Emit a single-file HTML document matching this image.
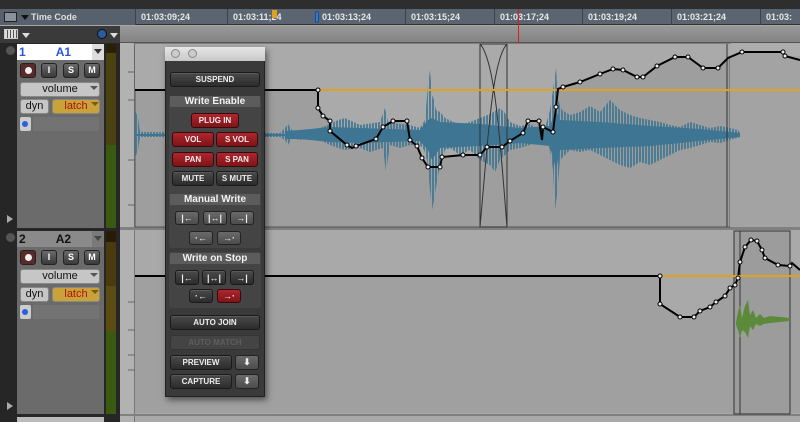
<!DOCTYPE html>
<html><head><meta charset="utf-8"><style>
*{box-sizing:border-box;margin:0;padding:0}
body{width:800px;height:422px;overflow:hidden;background:#a8a8a8;font-family:"Liberation Sans",sans-serif;position:relative}
.a{position:absolute}
.btn{position:absolute;border-radius:3px;font:bold 8px "Liberation Sans",sans-serif;color:#eee;text-align:center;display:flex;align-items:center;justify-content:center}
.dk{background:linear-gradient(#4a4a4a,#2c2c2c);border:1px solid #1a1a1a;box-shadow:inset 0 1px 0 #5a5a5a}
.rd{background:linear-gradient(#b0262e,#7e1419);border:1px solid #3a0a0a}
.gr{background:linear-gradient(#6a6a6a,#4c4c4c);border:1px solid #222;font-size:9px}
.hd{position:absolute;left:170px;width:90px;height:11px;background:#5c5c5c;color:#f2f2f2;font:bold 10px "Liberation Sans",sans-serif;text-align:center;line-height:11px}
.tb{position:absolute;width:16px;height:15px;border-radius:3px;background:linear-gradient(#6a6a6a,#3a3a3a);border:1px solid #222;color:#fff;font:bold 9px "Liberation Sans",sans-serif;text-align:center;line-height:13px}
.lb{position:absolute;border-radius:3px;background:#c6c6c6;border:1px solid #888;font:11px "Liberation Sans",sans-serif;color:#111;text-align:center}
.tc{position:absolute;top:9px;height:16px;color:#e8e8e8;font:bold 9px "Liberation Sans",sans-serif;line-height:16px;border-left:1px solid #3a424a;padding-left:5px}
</style></head><body>
<div class="a" style="left:0;top:0;width:800px;height:9px;background:#2e2e2e"></div>
<div class="a" style="left:0;top:9px;width:800px;height:16px;background:#5a6571;border-bottom:1px solid #333"></div>
<div class="a" style="left:0;top:9px;width:135px;height:16px;background:#56616d"></div>
<div class="a" style="left:4px;top:12px;width:13px;height:10px;border:1px solid #222;background:#8a939c"></div>
<div class="a" style="left:21px;top:15px;width:0;height:0;border-left:4px solid transparent;border-right:4px solid transparent;border-top:5px solid #111"></div>
<div class="a" style="left:31px;top:9px;color:#ddd;font:bold 9px 'Liberation Sans',sans-serif;line-height:16px">Time Code</div>
<div class="tc" style="left:135px;width:92px">01:03:09;24</div>
<div class="tc" style="left:227px;width:90px">01:03:11;24</div>
<div class="tc" style="left:317px;width:88px;border-left:none">01:03:13;24</div>
<div class="tc" style="left:405px;width:89px">01:03:15;24</div>
<div class="tc" style="left:494px;width:88px">01:03:17;24</div>
<div class="tc" style="left:582px;width:89px">01:03:19;24</div>
<div class="tc" style="left:671px;width:89px">01:03:21;24</div>
<div class="tc" style="left:760px;width:40px">01:03:</div>
<div class="a" style="left:272px;top:10px;width:5px;height:8px;background:#e0a020"></div>
<div class="a" style="left:315px;top:11px;width:4px;height:12px;border:1px solid #1a4a9a;border-radius:2px;background:#3a78d0"></div>
<div class="a" style="left:0;top:26px;width:120px;height:17px;background:#3a3a3a"></div>
<div class="a" style="left:120px;top:26px;width:680px;height:17px;background:linear-gradient(#999,#838383);border-bottom:1px solid #555"></div>
<div class="a" style="left:4px;top:29px;width:14px;height:10px;border:1px solid #ccc;background:repeating-linear-gradient(90deg,#ddd 0 2px,#555 2px 3px)"></div>
<div class="a" style="left:22px;top:33px;border-left:4px solid transparent;border-right:4px solid transparent;border-top:5px solid #ddd"></div>
<div class="a" style="left:97px;top:29px;width:10px;height:10px;border-radius:50%;background:#2d5aa0;border:1px solid #111"></div>
<div class="a" style="left:110px;top:33px;border-left:4px solid transparent;border-right:4px solid transparent;border-top:5px solid #ddd"></div>
<div class="a" style="left:518px;top:9px;width:1px;height:35px;background:#d02020"></div>
<div class="a" style="left:0;top:43px;width:120px;height:379px;background:#262626"></div>
<div class="a" style="left:17px;top:44px;width:87px;height:184px;background:#6b6b6b"></div>
<div class="a" style="left:17px;top:231px;width:87px;height:183px;background:#6b6b6b"></div>
<div class="a" style="left:17px;top:417px;width:87px;height:5px;background:#bbb"></div>
<div class="a" style="left:6px;top:46px;width:9px;height:9px;border-radius:50%;background:#555"></div>
<div class="a" style="left:6px;top:233px;width:9px;height:9px;border-radius:50%;background:#555"></div>
<div class="a" style="left:7px;top:215px;border-top:4px solid transparent;border-bottom:4px solid transparent;border-left:6px solid #aaa"></div>
<div class="a" style="left:7px;top:402px;border-top:4px solid transparent;border-bottom:4px solid transparent;border-left:6px solid #aaa"></div>
<div class="a" style="left:17px;top:44px;width:75px;height:16px;background:#fff;color:#2a55e0;font:bold 12px 'Liberation Sans',sans-serif;line-height:16px;padding-left:2px">1<span style="margin-left:30px">A1</span></div>
<div class="a" style="left:92px;top:44px;width:12px;height:16px;background:#ddd"></div>
<div class="a" style="left:94px;top:49px;border-left:4px solid transparent;border-right:4px solid transparent;border-top:5px solid #333"></div>
<div class="a" style="left:17px;top:231px;width:75px;height:16px;background:#8a8a8a;color:#111;font:bold 12px 'Liberation Sans',sans-serif;line-height:16px;padding-left:2px">2<span style="margin-left:30px">A2</span></div>
<div class="a" style="left:92px;top:231px;width:12px;height:16px;background:#7a7a7a"></div>
<div class="a" style="left:94px;top:236px;border-left:4px solid transparent;border-right:4px solid transparent;border-top:5px solid #444"></div>
<div class="a" style="left:20px;top:63px;width:16px;height:15px;border-radius:3px;background:#5a2a2a;border:1px solid #222"><span style="position:absolute;left:4px;top:3px;width:7px;height:7px;border-radius:50%;background:#eee"></span></div>
<div class="tb" style="left:41px;top:63px">I</div><div class="tb" style="left:63px;top:63px">S</div><div class="tb" style="left:84px;top:63px">M</div>
<div class="lb" style="left:20px;top:82px;width:80px;height:15px;line-height:13px">volume</div>
<div class="a" style="left:90px;top:86px;border-left:4px solid transparent;border-right:4px solid transparent;border-top:4px solid #555"></div>
<div class="lb" style="left:20px;top:99px;width:29px;height:15px;line-height:13px">dyn</div>
<div class="lb" style="left:52px;top:99px;width:48px;height:15px;line-height:13px;background:#c9a23a;color:#b01010">latch</div>
<div class="a" style="left:91px;top:102px;border-left:4px solid transparent;border-right:4px solid transparent;border-top:4px solid #7a5a10"></div>
<div class="a" style="left:20px;top:117px;width:11px;height:14px;background:#ccc;border-radius:2px"><span style="position:absolute;left:2px;top:4px;width:6px;height:6px;border-radius:50%;background:#2a60e0"></span></div>
<div class="a" style="left:33px;top:117px;width:66px;height:14px;background:#737373"></div>
<div class="a" style="left:20px;top:250px;width:16px;height:15px;border-radius:3px;background:#5a2a2a;border:1px solid #222"><span style="position:absolute;left:4px;top:3px;width:7px;height:7px;border-radius:50%;background:#eee"></span></div>
<div class="tb" style="left:41px;top:250px">I</div><div class="tb" style="left:63px;top:250px">S</div><div class="tb" style="left:84px;top:250px">M</div>
<div class="lb" style="left:20px;top:269px;width:80px;height:15px;line-height:13px">volume</div>
<div class="a" style="left:90px;top:273px;border-left:4px solid transparent;border-right:4px solid transparent;border-top:4px solid #555"></div>
<div class="lb" style="left:20px;top:287px;width:29px;height:15px;line-height:13px">dyn</div>
<div class="lb" style="left:52px;top:287px;width:48px;height:15px;line-height:13px;background:#c9a23a;color:#b01010">latch</div>
<div class="a" style="left:91px;top:290px;border-left:4px solid transparent;border-right:4px solid transparent;border-top:4px solid #7a5a10"></div>
<div class="a" style="left:20px;top:305px;width:11px;height:14px;background:#ccc;border-radius:2px"><span style="position:absolute;left:2px;top:4px;width:6px;height:6px;border-radius:50%;background:#2a60e0"></span></div>
<div class="a" style="left:33px;top:305px;width:66px;height:14px;background:#737373"></div>
<div class="a" style="left:106px;top:44px;width:10px;height:184px;background:linear-gradient(#2a2008 0 5%,#4a4210 5% 55%,#3a5a12 55%)"></div>
<div class="a" style="left:106px;top:231px;width:10px;height:183px;background:linear-gradient(#2a1a08 0 6%,#4a3a10 6% 30%,#5a4c12 30% 55%,#3a5a12 55%)"></div>
<div class="a" style="left:120px;top:43px;width:680px;height:379px;background:#a9a9a9"></div>
<div class="a" style="left:120px;top:43px;width:15px;height:379px;background:#b2b2b2;border-right:1px solid #777"></div>
<div class="a" style="left:120px;top:227px;width:680px;height:3px;background:#808080"></div>
<div class="a" style="left:120px;top:414px;width:680px;height:2px;background:#808080"></div>
<svg class="a" style="left:0;top:0" width="800" height="422">
<defs><pattern id="st" width="3" height="10" patternUnits="userSpaceOnUse"><rect width="2" height="10" fill="#3e7592"/></pattern></defs>
<g stroke="#666" stroke-width="1"><line x1="128" y1="72" x2="135" y2="72"/><line x1="128" y1="100" x2="135" y2="100"/><line x1="128" y1="160" x2="135" y2="160"/><line x1="128" y1="205" x2="135" y2="205"/><line x1="128" y1="302" x2="135" y2="302"/><line x1="128" y1="330" x2="135" y2="330"/><line x1="128" y1="355" x2="135" y2="355"/><line x1="128" y1="370" x2="135" y2="370"/></g>
<rect x="135" y="44" width="595" height="183" fill="#9e9e9e" stroke="#555"/>
<polygon fill="#aaaaaa" points="135,44 135,90 318,90 318,108 323,116 330,121 330,131 347,145 352,148 356,146 376,139 383,127 393,121 407,121 410,140 417,146 422,158 428,167 440,167 442,157 463,155 480,155 487,147 502,147 510,141 523,133 528,121 539,121 542,140 543,127 553,132 556,107 558,89 563,87 580,82 600,74 613,69 623,70 637,77 643,77 657,66 675,57 688,57 703,68 718,68 728,58 730,56 730,44"/>
<rect x="730" y="44" width="70" height="183" fill="#a3a3a3"/>
<polygon fill="#adadad" points="730,44 730,56 742,52 783,52 785,56 800,56 800,44"/>
<rect x="135" y="134" width="150" height="2" fill="#3e7592"/>
<polygon fill="url(#st)" opacity="0.85" points="135,110 138,118 140,132 280,133 285,128 288,124 292,130 300,132 310,131 320,128 330,124 338,120 345,118 360,125 380,122 385,108 388,122 400,124 410,125 420,128 425,120 428,85 430,70 432,95 434,100 436,110 440,112 445,118 460,125 470,122 480,118 490,114 500,108 505,113 510,122 520,126 530,124 540,130 545,128 550,110 553,90 556,68 558,100 562,110 570,115 580,112 590,106 600,112 610,100 620,110 630,115 640,118 650,120 660,122 670,125 680,127 690,122 700,125 710,128 720,126 730,128 738,130 740,133 740,137 730,140 720,143 710,142 700,145 690,148 680,150 670,155 660,160 650,165 640,162 630,168 620,165 610,160 600,155 590,150 580,152 570,150 560,160 557,195 555,210 553,170 550,150 545,140 540,140 530,145 520,148 510,150 500,160 495,172 490,165 480,160 470,150 460,155 450,148 445,150 438,175 434,200 432,210 430,190 427,160 424,150 420,145 410,145 400,148 390,145 386,172 383,148 370,152 360,148 345,150 338,148 330,145 320,140 310,138 300,140 292,138 288,145 285,140 280,137 140,137 138,150 135,158"/>
<polygon fill="#3e7592" points="285,131 300,130 330,127 360,128 420,130 428,120 432,118 440,122 480,124 520,128 550,126 556,110 560,120 600,122 650,126 700,129 740,133 740,137 700,141 650,146 600,148 560,150 556,170 550,146 520,143 480,146 440,148 432,160 428,150 420,141 360,143 330,142 300,139 285,139"/>
<rect x="480" y="44" width="27" height="183" fill="none" stroke="#333"/>
<path d="M480,227 C488,140 492,60 507,44 M480,44 C495,60 500,140 507,227" fill="none" stroke="#333"/>
<line x1="727" y1="44" x2="727" y2="227" stroke="#333"/>
<line x1="318" y1="90" x2="800" y2="90" stroke="#e0a020" stroke-width="2"/>
<polyline fill="none" stroke="#000" stroke-width="2" points="135,90 318,90 318,108 323,116 330,121 330,131 347,145 352,148 356,146 376,139 383,127 393,121 407,121 410,140 417,146 422,158 428,167 440,167 442,157 463,155 480,155 487,147 502,147 510,141 523,133 528,121 539,121 542,140 543,127 553,132 556,107 558,89 563,87 580,82 600,74 613,69 623,70 637,77 643,77 657,66 675,57 688,57 703,68 718,68 728,58 742,52 783,52 785,56 800,60"/>
<g fill="#eee" stroke="#000" stroke-width="1">
<circle cx="318" cy="90" r="2"/><circle cx="318" cy="108" r="2"/><circle cx="323" cy="116" r="2"/><circle cx="330" cy="121" r="2"/><circle cx="330" cy="131" r="2"/><circle cx="347" cy="145" r="2"/><circle cx="356" cy="146" r="2"/><circle cx="376" cy="139" r="2"/><circle cx="383" cy="127" r="2"/><circle cx="393" cy="121" r="2"/><circle cx="407" cy="121" r="2"/><circle cx="410" cy="140" r="2"/><circle cx="417" cy="146" r="2"/><circle cx="422" cy="158" r="2"/><circle cx="428" cy="167" r="2"/><circle cx="440" cy="167" r="2"/><circle cx="442" cy="157" r="2"/><circle cx="463" cy="155" r="2"/><circle cx="480" cy="155" r="2"/><circle cx="487" cy="147" r="2"/><circle cx="502" cy="147" r="2"/><circle cx="510" cy="141" r="2"/><circle cx="523" cy="133" r="2"/><circle cx="528" cy="121" r="2"/><circle cx="539" cy="121" r="2"/><circle cx="543" cy="127" r="2"/><circle cx="553" cy="132" r="2"/><circle cx="556" cy="107" r="2"/><circle cx="563" cy="87" r="2"/><circle cx="580" cy="82" r="2"/><circle cx="600" cy="74" r="2"/><circle cx="613" cy="69" r="2"/><circle cx="623" cy="70" r="2"/><circle cx="637" cy="77" r="2"/><circle cx="643" cy="77" r="2"/><circle cx="657" cy="66" r="2"/><circle cx="675" cy="57" r="2"/><circle cx="688" cy="57" r="2"/><circle cx="703" cy="68" r="2"/><circle cx="718" cy="68" r="2"/><circle cx="742" cy="52" r="2"/><circle cx="783" cy="52" r="2"/><circle cx="785" cy="56" r="2"/>
</g>
<polygon fill="#a0a0a0" points="135,277 660,277 660,304 680,317 694,317 700,311 716,302 730,288 738,278 740,262 745,247 751,240 757,241 765,258 778,265 790,266 800,270 800,413 135,413"/>
<rect x="734" y="231" width="56" height="183" fill="#9c9c9c" stroke="#333"/>
<line x1="740" y1="231" x2="740" y2="414" stroke="#333"/>
<path fill="#5a8a3a" d="M736,322 L738,312 740,305 742,318 745,306 748,300 750,315 753,310 756,318 760,314 764,318 770,316 780,317 790,318 790,321 780,322 770,323 764,324 760,326 756,324 753,330 750,326 748,338 745,332 742,330 740,338 738,330 736,325Z"/>
<polyline fill="none" stroke="#000" stroke-width="2" points="135,276 660,276 660,304 680,317 694,317 700,311 710,307 716,302 725,296 730,288 735,285 738,278 740,262 745,247 751,240 757,241 762,250 765,258 778,265 790,266 792,263 800,270"/>
<line x1="660" y1="276" x2="800" y2="276" stroke="#e0a020" stroke-width="2"/>
<g fill="#eee" stroke="#000"><circle cx="660" cy="276" r="2"/><circle cx="660" cy="304" r="2"/><circle cx="680" cy="317" r="2"/><circle cx="694" cy="317" r="2"/><circle cx="700" cy="311" r="2"/><circle cx="710" cy="307" r="2"/><circle cx="716" cy="302" r="2"/><circle cx="725" cy="296" r="2"/><circle cx="730" cy="288" r="2"/><circle cx="735" cy="285" r="2"/><circle cx="738" cy="278" r="2"/><circle cx="740" cy="262" r="2"/><circle cx="745" cy="247" r="2"/><circle cx="751" cy="240" r="2"/><circle cx="757" cy="241" r="2"/><circle cx="762" cy="250" r="2"/><circle cx="765" cy="258" r="2"/><circle cx="778" cy="265" r="2"/><circle cx="790" cy="266" r="2"/></g>
</svg>
<div class="a" style="left:165px;top:47px;width:100px;height:350px;background:#3a3a3a;border:1px solid #222;box-shadow:2px 3px 6px rgba(0,0,0,.5)"></div>
<div class="a" style="left:165px;top:47px;width:100px;height:14px;background:linear-gradient(#e6e6e6,#c8c8c8)"></div>
<div class="a" style="left:171px;top:49px;width:9px;height:9px;border-radius:50%;background:#ccc;border:1px solid #888"></div>
<div class="a" style="left:188px;top:49px;width:9px;height:9px;border-radius:50%;background:#ccc;border:1px solid #888"></div>
<div class="btn dk" style="left:170px;top:72px;width:90px;height:15px">SUSPEND</div>
<div class="a" style="left:169px;top:96px;width:92px;height:152px;background:#444;border-radius:3px"></div>
<div class="a" style="left:169px;top:252px;width:92px;height:56px;background:#444;border-radius:3px"></div>
<div class="hd" style="top:96px">Write Enable</div>
<div class="btn rd" style="left:191px;top:113px;width:48px;height:15px">PLUG IN</div>
<div class="btn rd" style="left:172px;top:132px;width:42px;height:15px">VOL</div>
<div class="btn rd" style="left:216px;top:132px;width:42px;height:15px">S VOL</div>
<div class="btn rd" style="left:172px;top:152px;width:42px;height:15px">PAN</div>
<div class="btn rd" style="left:216px;top:152px;width:42px;height:15px">S PAN</div>
<div class="btn dk" style="left:172px;top:171px;width:42px;height:15px">MUTE</div>
<div class="btn dk" style="left:216px;top:171px;width:42px;height:15px">S MUTE</div>
<div class="hd" style="top:194px">Manual Write</div>
<div class="btn gr" style="left:175px;top:211px;width:24px;height:14px">|←</div>
<div class="btn gr" style="left:203px;top:211px;width:24px;height:14px">|↔|</div>
<div class="btn gr" style="left:230px;top:211px;width:24px;height:14px">→|</div>
<div class="btn gr" style="left:189px;top:231px;width:24px;height:14px">·←</div>
<div class="btn gr" style="left:217px;top:231px;width:24px;height:14px">→·</div>
<div class="hd" style="top:253px">Write on Stop</div>
<div class="btn dk" style="left:175px;top:270px;width:24px;height:15px;font-size:9px">|←</div>
<div class="btn dk" style="left:202px;top:270px;width:24px;height:15px;font-size:9px">|↔|</div>
<div class="btn dk" style="left:230px;top:270px;width:24px;height:15px;font-size:9px">→|</div>
<div class="btn dk" style="left:189px;top:289px;width:24px;height:14px;font-size:9px">·←</div>
<div class="btn rd" style="left:217px;top:289px;width:24px;height:14px;font-size:9px">→·</div>
<div class="btn dk" style="left:170px;top:315px;width:90px;height:15px">AUTO JOIN</div>
<div class="btn" style="left:170px;top:335px;width:90px;height:15px;background:#444;border:1px solid #333;color:#5e5e5e">AUTO MATCH</div>
<div class="btn dk" style="left:170px;top:355px;width:62px;height:15px">PREVIEW</div>
<div class="btn gr" style="left:235px;top:355px;width:24px;height:15px">⬇</div>
<div class="btn dk" style="left:170px;top:374px;width:62px;height:15px">CAPTURE</div>
<div class="btn gr" style="left:235px;top:374px;width:24px;height:15px">⬇</div>
</body></html>
